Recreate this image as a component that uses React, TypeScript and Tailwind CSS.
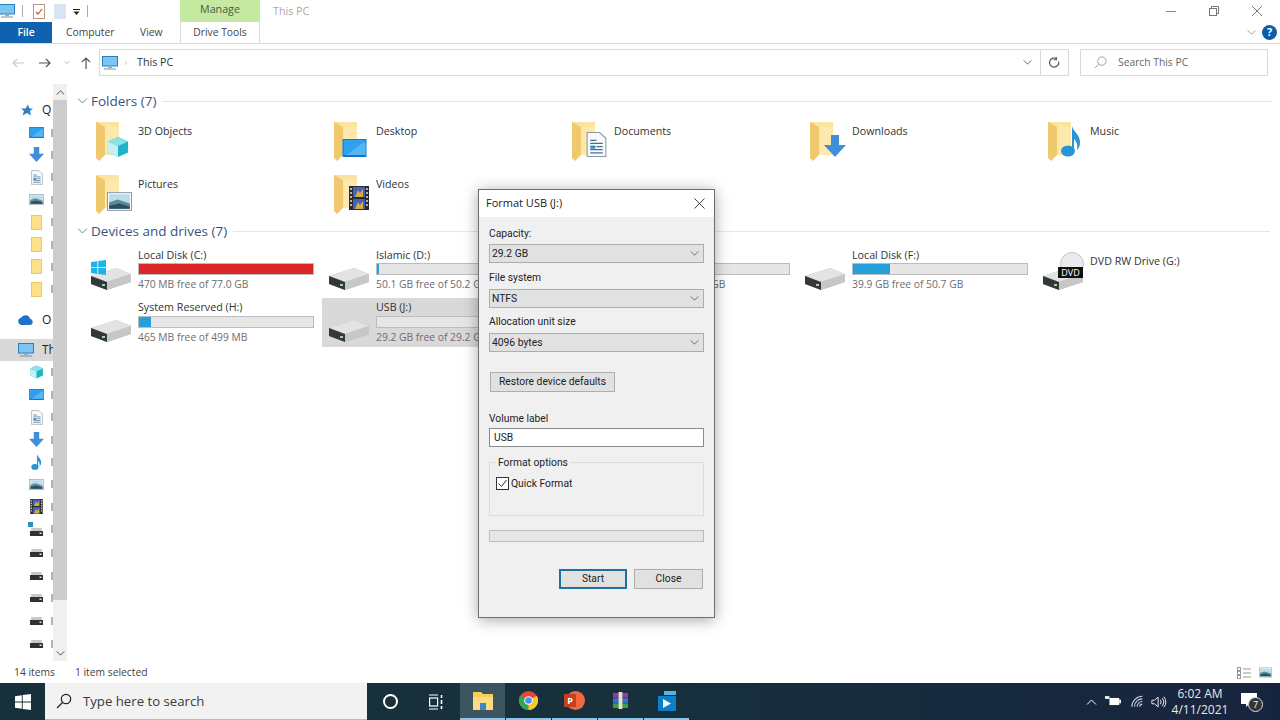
import type { ReactNode } from "react";

const folders = [
  { name: "3D Objects", kind: "cube" },
  { name: "Desktop", kind: "desktop" },
  { name: "Documents", kind: "doc" },
  { name: "Downloads", kind: "down" },
  { name: "Music", kind: "music" },
  { name: "Pictures", kind: "pics" },
  { name: "Videos", kind: "video" },
];

const drives = [
  { name: "Local Disk (C:)", free: "470 MB free of 77.0 GB", used: 100, color: "bg-[#da2626]", win: true },
  { name: "Islamic (D:)", free: "50.1 GB free of 50.2 GB", used: 1, color: "bg-[#26a0da]" },
  { name: "New Volume (E:)", free: "50.1 GB free of 50.2 GB", used: 1, color: "bg-[#26a0da]" },
  { name: "Local Disk (F:)", free: "39.9 GB free of 50.7 GB", used: 21, color: "bg-[#26a0da]" },
  { name: "DVD RW Drive (G:)", dvd: true },
  { name: "System Reserved (H:)", free: "465 MB free of 499 MB", used: 7, color: "bg-[#26a0da]", low: true },
  { name: "USB (J:)", free: "29.2 GB free of 29.2 GB", used: 0, color: "bg-[#26a0da]", selected: true, low: true },
];

function Glyph({ kind }: { kind: string }) {
  if (kind === "cube")
    return (
      <svg viewBox="0 0 24 24" className="h-full w-full">
        <polygon points="12,1 23,6 23,18 12,23 1,18 1,6" fill="#1fb3c9" />
        <polygon points="12,1 23,6 12,11 1,6" fill="#8be3ea" />
        <polygon points="1,6 12,11 12,23 1,18" fill="#c4f1f3" />
      </svg>
    );
  if (kind === "desktop")
    return (
      <svg viewBox="0 0 24 18" className="h-full w-full">
        <rect x="0" y="0" width="24" height="18" fill="#0f78c8" />
        <rect x="1" y="1" width="22" height="15" fill="#2f9ff0" />
        <polygon points="4,16 20,4 23,4 23,16" fill="#55b6f5" />
      </svg>
    );
  if (kind === "doc")
    return (
      <svg viewBox="0 0 20 24" className="h-full w-full">
        <polygon points="1,0.5 13,0.5 19,6 19,23.5 1,23.5" fill="#f8fbfd" stroke="#8a97a3" />
        <path d="M4 8h6M4 11h12M10 14h6M4 17h12M4 20h12" stroke="#4a6d8c" strokeWidth="1.2" />
        <rect x="4" y="13" width="5" height="3" fill="#2e8fd0" />
      </svg>
    );
  if (kind === "down")
    return (
      <svg viewBox="0 0 22 22" className="h-full w-full">
        <polygon points="7,0 15,0 15,10 22,10 11,22 0,10 7,10" fill="#3d8fdc" />
      </svg>
    );
  if (kind === "music")
    return (
      <svg viewBox="0 0 20 31" className="h-full w-full">
        <ellipse cx="7" cy="25" rx="7" ry="5.5" fill="#2a94d8" />
        <path d="M11 25V0c1 6 8 8 8 16 0 4-1 6-3 8 1-6-1-9-3-11v12z" fill="#2a94d8" />
      </svg>
    );
  if (kind === "pics")
    return (
      <svg viewBox="0 0 24 18" className="h-full w-full">
        <rect x="0.5" y="0.5" width="23" height="17" fill="#fff" stroke="#8a97a3" />
        <rect x="2" y="2" width="20" height="14" fill="#bcdcea" />
        <polygon points="2,10 10,7 22,11 22,16 2,16" fill="#5d8a94" />
        <polygon points="2,13 12,11 22,14 22,16 2,16" fill="#27505c" />
      </svg>
    );
  return (
    <svg viewBox="0 0 20 24" className="h-full w-full">
      <rect width="20" height="24" fill="#2a2a2a" />
      <rect x="4" y="1" width="12" height="10" fill="#3f62c4" />
      <rect x="4" y="13" width="12" height="10" fill="#3f62c4" />
      <path d="M6 11l3-7 2 3 3-4v8z" fill="#d9a93a" />
      <path d="M6 23l3-7 2 3 3-4v8z" fill="#d9a93a" />
      <path d="M2 2v20M18 2v20" stroke="#d8d8d8" strokeWidth="1.6" strokeDasharray="2 2" />
    </svg>
  );
}

function FolderIcon({ kind }: { kind: string }) {
  const overlay: Record<string, string> = {
    cube: "right-[-1px] bottom-[2px] w-[22px] h-[24px]",
    desktop: "right-[-2px] bottom-[4px] w-[27px] h-[18px]",
    doc: "right-[-3px] bottom-[4px] w-[21px] h-[25px]",
    down: "right-[-4px] bottom-[3px] w-[22px] h-[24px]",
    music: "right-[-1px] bottom-[4px] w-[20px] h-[31px]",
    pics: "right-[-4px] bottom-[3px] w-[25px] h-[19px]",
    video: "right-[-3px] bottom-[3px] w-[20px] h-[26px]",
  };
  return (
    <div className="relative h-[39px] w-[32px]">
      <svg viewBox="0 0 32 39" className="h-full w-full">
        <rect x="0" y="0" width="23" height="33" fill="#fbe3a0" />
        <polygon points="0,0 9,5 9,33 3,39 0,36" fill="#f0c96f" />
        <rect x="9" y="5" width="14" height="28" fill="#fde9ae" />
      </svg>
      <div className={`absolute ${overlay[kind]}`}>
        <Glyph kind={kind} />
      </div>
    </div>
  );
}

function DriveIcon() {
  return (
    <svg viewBox="0 0 40 22" className="h-[22px] w-[40px]">
      <polygon points="0,8 25,0 40,6 40,14 16,22 0,16" fill="#b9b9b9" />
      <polygon points="0,8 25,0 40,6 16,14" fill="#e3e3e3" />
      <polygon points="0,8 16,14 16,22 0,16" fill="#33383a" />
      <polygon points="16,14 40,6 40,14 16,22" fill="#c7c7c7" />
      <rect x="11" y="16" width="3" height="2" fill="#a8d0a0" />
    </svg>
  );
}

function SmallDrive() {
  return (
    <svg viewBox="0 0 13 8" className="h-[8px] w-[13px]">
      <rect x="1" y="0" width="11" height="3" rx="1" fill="#c9c9c9" />
      <rect x="0" y="3" width="13" height="5" fill="#2f3234" />
      <rect x="9.500" y="4.500" width="2" height="1.500" fill="#e4e4e4" />
    </svg>
  );
}

function WinLogo({ className, color }: { className: string; color: string }) {
  return (
    <svg viewBox="0 0 16 16" className={className}>
      <path d="M0 2.2l6.8-1v6.4H0zM7.7 1.1L16 0v7.6H7.7zM0 8.4h6.8v6.4L0 13.8zM7.7 8.4H16V16l-8.3-1.1z" fill={color} />
    </svg>
  );
}

function Chevron({ className, color = "#6a6a6a" }: { className: string; color?: string }) {
  return (
    <svg viewBox="0 0 10 6" className={className}>
      <path d="M0.5 0.5L5 5l4.5-4.5" fill="none" stroke={color} strokeWidth="1" />
    </svg>
  );
}

function Monitor({ className }: { className: string }) {
  return (
    <svg viewBox="0 0 16 14" className={className}>
      <rect x="0" y="0" width="16" height="10.5" fill="#2a7fc0" />
      <rect x="1" y="1" width="14" height="8.5" fill="#7cc6f2" />
      <rect x="6" y="10.5" width="4" height="1.5" fill="#9aa7b2" />
      <rect x="2" y="12.5" width="12" height="1" fill="#7d8a96" />
    </svg>
  );
}

function GroupHeader({ title, line }: { title: string; line: string }) {
  return (
    <div className="flex h-4 items-center">
      <Chevron className="ml-[-7px] h-[6px] w-[11px]" color="#7a8594" />
      <span className="ml-[3px] text-[13.5px] text-[#1f3f73] opacity-90">{title}</span>
      <div className={`ml-[6px] h-px ${line} bg-[#e6e6e6]`} />
    </div>
  );
}

function SideRow({ children, label, mt, selected }: { children: ReactNode; label?: string; mt?: string; selected?: boolean }) {
  return (
    <div className={`flex h-[22.4px] w-[53px] shrink-0 items-center justify-end ${mt ?? ""} ${selected ? "bg-[#d9d9d9]" : ""}`}>
      <div className="flex w-[17px] justify-center">{children}</div>
      {label ? (
        <span className="ml-[3px] w-[11px] overflow-hidden text-[12px] leading-none text-[#222]">{label}</span>
      ) : (
        <span className="ml-[6px] mr-0 h-[8px] w-[2px] bg-[#a08f8f] opacity-70" />
      )}
    </div>
  );
}

function SmallFolder() {
  return <div className="h-[15px] w-[11px] border border-[#ecc766] bg-[#fde08a]" />;
}

function Sidebar() {
  return (
    <div className="flex w-[67px] shrink-0">
      <div className="flex w-[53px] flex-col pt-[15px]">
        <SideRow label="Q">
          <svg viewBox="0 0 24 24" className="ml-[-8px] h-[12px] w-[12px]">
            <polygon points="14,1 17,9 24,9 18,14 20,23 12,18 3,23 6,14 0,9 9,9" fill="#2f7fc4" />
          </svg>
        </SideRow>
        <SideRow><div className="h-[11px] w-[15px]"><Glyph kind="desktop" /></div></SideRow>
        <SideRow><div className="h-[15px] w-[15px]"><Glyph kind="down" /></div></SideRow>
        <SideRow><div className="h-[15px] w-[12px]"><Glyph kind="doc" /></div></SideRow>
        <SideRow><div className="h-[11px] w-[15px]"><Glyph kind="pics" /></div></SideRow>
        <SideRow><SmallFolder /></SideRow>
        <SideRow><SmallFolder /></SideRow>
        <SideRow><SmallFolder /></SideRow>
        <SideRow><SmallFolder /></SideRow>
        <SideRow label="O" mt="mt-[8px]">
          <svg viewBox="0 0 18 11" className="ml-[-9px] h-[10px] w-[16px]">
            <path d="M4 11a4 4 0 0 1-.6-7.9A5.5 5.5 0 0 1 13.6 4 3.6 3.6 0 0 1 14 11z" fill="#1b74c5" />
          </svg>
        </SideRow>
        <SideRow label="Th" mt="mt-[8px]" selected><Monitor className="ml-[-10px] h-[14px] w-[16px]" /></SideRow>
        <SideRow><div className="h-[14px] w-[15px]"><Glyph kind="cube" /></div></SideRow>
        <SideRow><div className="h-[11px] w-[15px]"><Glyph kind="desktop" /></div></SideRow>
        <SideRow><div className="h-[15px] w-[12px]"><Glyph kind="doc" /></div></SideRow>
        <SideRow><div className="h-[15px] w-[15px]"><Glyph kind="down" /></div></SideRow>
        <SideRow><div className="h-[16px] w-[11px]"><Glyph kind="music" /></div></SideRow>
        <SideRow><div className="h-[11px] w-[15px]"><Glyph kind="pics" /></div></SideRow>
        <SideRow><div className="h-[15px] w-[13px]"><Glyph kind="video" /></div></SideRow>
        <SideRow>
          <div className="relative mt-[5px]">
            <SmallDrive />
            <div className="absolute left-[-2px] top-[-6px] h-[5px] w-[5px] bg-[#2f8fc4]" />
          </div>
        </SideRow>
        <SideRow mt="mt-[1px]"><SmallDrive /></SideRow>
        <SideRow mt="mt-[1px]"><SmallDrive /></SideRow>
        <SideRow><SmallDrive /></SideRow>
        <SideRow><SmallDrive /></SideRow>
        <SideRow mt="mt-[1px]"><SmallDrive /></SideRow>
      </div>
      <div className="flex w-[14px] flex-col items-center bg-[#f0f0f0]">
        <div className="flex h-[16px] items-center"><Chevron className="h-[5px] w-[9px] rotate-180" color="#333" /></div>
        <div className="h-[500px] w-full bg-[#cdcdcd]" />
        <div className="flex-1" />
        <div className="flex h-[16px] items-center"><Chevron className="h-[5px] w-[9px]" color="#333" /></div>
      </div>
    </div>
  );
}

function DriveCell({ d }: { d: (typeof drives)[number] }) {
  return (
    <div className={`flex w-[238px] pl-[7px] ${d.low ? "h-[49px]" : "h-[52px]"} ${d.selected ? "bg-[#d9d9d9]" : ""}`}>
      <div className={`relative flex h-full w-[47px] shrink-0 items-end ${d.low ? "pb-[5px]" : "pb-[8px]"}`}>
        <DriveIcon />
        {d.win && <WinLogo className="absolute left-0 top-[14px] h-[15px] w-[15px]" color="#1db4e8" />}
        {d.dvd && (
          <>
            <div className="absolute left-[17px] top-[6px] h-[24px] w-[24px] rounded-full border border-[#c4c4c4] bg-[#e8eaeb]" />
            <div className="absolute left-[15px] top-[21px] h-[11px] w-[25px] bg-[#111] text-center text-[9px] leading-[11px] text-white">DVD</div>
          </>
        )}
      </div>
      {d.dvd ? (
        <div className="pt-[7px] text-[#333]">{d.name}</div>
      ) : (
        <div className={`w-[176px] ${d.low ? "pt-[1px]" : "pt-[1px]"}`}>
          <div className="h-[16px] leading-[16px] text-[#333]">{d.name}</div>
          <div className={`h-[12px] w-full border border-[#bcbcbc] bg-[#e6e6e6] ${d.low ? "mt-[1px]" : ""}`}>
            <div className={`h-full ${d.color}`} style={{ width: `${d.used}%` }} />
          </div>
          <div className="mt-[1px] h-[16px] whitespace-nowrap text-[10.3px] leading-[16px] text-[#6d6d6d]">{d.free}</div>
        </div>
      )}
    </div>
  );
}

function Select({ value }: { value: string }) {
  return (
    <div className="flex h-[19px] w-[215px] items-center justify-between border border-[#adadad] bg-[#e1e1e1] pl-[2px] pr-[4px]">
      <span className="text-[#222]">{value}</span>
      <Chevron className="h-[5px] w-[9px]" color="#555" />
    </div>
  );
}

function FormatDialog() {
  return (
    <div className="absolute left-[478px] top-[189px] h-[429px] w-[237px] border border-[#6e6e6e] bg-[#f0f0f0] shadow-[0_2px_14px_rgba(0,0,0,0.35)]">
      <div className="flex h-[27px] items-center justify-between bg-white pl-[7px] pr-[9px] text-[#222]">
        <span className="text-[11px]">Format USB (J:)</span>
        <svg viewBox="0 0 12 12" className="h-[11px] w-[11px]"><path d="M0.5 0.5l11 11M11.5 0.5l-11 11" stroke="#333" strokeWidth="1" /></svg>
      </div>
      <div className="px-[10px] font-['Roboto',sans-serif] text-[10.3px] text-[#222]">
        <div className="mt-[8px] h-[19px] leading-[17px]">Capacity:</div>
        <Select value="29.2 GB" />
        <div className="mt-[5px] h-[21px] leading-[20px]">File system</div>
        <Select value="NTFS" />
        <div className="mt-[4px] h-[21px] leading-[20px]">Allocation unit size</div>
        <Select value="4096 bytes" />
        <div className="ml-[1px] mt-[20px] flex h-[20px] w-[125px] items-center justify-center border border-[#adadad] bg-[#e1e1e1]">Restore device defaults</div>
        <div className="mt-[18px] h-[18px] leading-[17px]">Volume label</div>
        <div className="flex h-[19px] w-[215px] items-center border border-[#8a8a8a] bg-white pl-[4px]">USB</div>
        <div className="relative mt-[15px] h-[54px] w-[215px] border border-[#dcdcdc]">
          <span className="absolute left-[6px] top-[-7px] bg-[#f0f0f0] px-[2px] leading-[14px]">Format options</span>
          <div className="absolute left-[6px] top-[13px] flex items-center">
            <svg viewBox="0 0 13 13" className="h-[13px] w-[13px]">
              <rect x="0.5" y="0.5" width="12" height="12" fill="#fff" stroke="#333" />
              <path d="M2.5 6.5l3 3 5-6.5" fill="none" stroke="#333" strokeWidth="1" />
            </svg>
            <span className="ml-[2px]">Quick Format</span>
          </div>
        </div>
        <div className="mt-[14px] h-[12px] w-[215px] border border-[#bcbcbc] bg-[#e6e6e6]" />
        <div className="mt-[27px] flex gap-[7px] pl-[70px]">
          <div className="flex h-[20px] w-[68px] items-center justify-center border-2 border-[#1f6f9f] bg-[#e1e1e1]">Start</div>
          <div className="flex h-[20px] w-[69px] items-center justify-center border border-[#adadad] bg-[#e1e1e1]">Close</div>
        </div>
      </div>
    </div>
  );
}

function Taskbar() {
  return (
    <div className="flex h-[37px] items-center bg-gradient-to-r from-[#17303c] via-[#17303c] to-[#17243f] text-white">
      <div className="flex h-full w-[45px] items-center justify-center">
        <WinLogo className="h-[16px] w-[16px]" color="#ffffff" />
      </div>
      <div className="flex h-full w-[322px] items-center border-b border-[#bbb] bg-[#f2f2f2] pl-[11px]">
        <svg viewBox="0 0 16 16" className="h-[16px] w-[16px]"><circle cx="10" cy="6" r="4.7" fill="none" stroke="#222" strokeWidth="1.2" /><path d="M6.5 9.5L1 15" stroke="#222" strokeWidth="1.3" /></svg>
        <span className="ml-[11px] pt-[2px] text-[13.2px] text-[#3a3a3a]">Type here to search</span>
      </div>
      <div className="flex h-full w-[46px] items-center justify-center">
        <div className="h-[15px] w-[15px] rounded-full border-2 border-white" />
      </div>
      <div className="flex h-full w-[45px] items-center justify-center">
        <svg viewBox="0 0 16 16" className="h-[16px] w-[16px]" fill="none" stroke="#fff" strokeWidth="1.2">
          <path d="M1 1h9M1 15h9" /><rect x="1.6" y="4" width="8" height="8" /><path d="M13.5 1v3M13.5 6v4M13.5 12v3" strokeWidth="1.6" />
        </svg>
      </div>
      <div className="ml-[2px] flex h-full w-[45px] items-center justify-center border-b-2 border-[#8cc6ee] bg-[#3c5560]">
        <svg viewBox="0 0 20 18" className="h-[18px] w-[20px]">
          <path d="M0 0h8l2 2h10v16H0z" fill="#f7cf58" />
          <rect x="0" y="5" width="20" height="13" fill="#fbdc82" />
          <rect x="7" y="11" width="6" height="7" fill="#3b86c4" />
        </svg>
      </div>
      <div className="ml-[1px] flex h-full w-[45px] items-center justify-center border-b-2 border-[#8cc6ee]">
        <svg viewBox="0 0 20 20" className="h-[19px] w-[19px]">
          <circle cx="10" cy="10" r="10" fill="#e2483b" />
          <path d="M10 10L1.3 5A10 10 0 0 0 10 20z" fill="#2fa84f" />
          <path d="M10 10l8.7-5A10 10 0 0 1 10 20z" fill="#f8c82d" />
          <circle cx="10" cy="10" r="4.6" fill="#fff" />
          <circle cx="10" cy="10" r="3.5" fill="#4a8ef0" />
        </svg>
      </div>
      <div className="ml-[1px] flex h-full w-[45px] items-center justify-center border-b-2 border-[#8cc6ee]">
        <div className="relative h-[19px] w-[21px]">
          <div className="absolute right-0 top-0 h-[19px] w-[19px] rounded-full bg-[#f0693f]" />
          <div className="absolute left-0 top-[3px] flex h-[13px] w-[12px] items-center justify-center rounded-[1px] bg-[#c4401f] text-[9px] font-bold text-white">P</div>
        </div>
      </div>
      <div className="ml-[1px] flex h-full w-[45px] items-center justify-center border-b-2 border-[#8cc6ee]">
        <svg viewBox="0 0 18 18" className="h-[17px] w-[17px]">
          <rect x="1" y="1" width="16" height="5" fill="#8a3fa8" />
          <rect x="1" y="6.5" width="16" height="5" fill="#3d6fc0" />
          <rect x="1" y="12" width="16" height="5" fill="#3f9a4a" />
          <rect x="7" y="0" width="4" height="18" fill="#e8e0c8" />
        </svg>
      </div>
      <div className="ml-[1px] flex h-full w-[45px] items-center justify-center border-b-2 border-[#8cc6ee]">
        <svg viewBox="0 0 18 20" className="h-[20px] w-[18px]">
          <rect x="0" y="5" width="18" height="15" fill="#0d7fc7" />
          <rect x="6" y="0" width="12" height="4" fill="#55b4e6" />
          <polygon points="5,8 13,12.5 5,17" fill="#fff" />
        </svg>
      </div>
      <div className="ml-auto flex h-full items-center">
        <Chevron className="mr-[8px] h-[6px] w-[11px] rotate-180" color="#fff" />
        <svg viewBox="0 0 18 12" className="mr-[10px] h-[11px] w-[16px]">
          <rect x="5" y="2" width="11" height="8" fill="#fff" /><rect x="16" y="4" width="2" height="4" fill="#fff" /><rect x="0" y="0" width="5" height="3" fill="#fff" />
        </svg>
        <svg viewBox="0 0 16 14" className="mr-[6px] h-[13px] w-[14px]" fill="none" stroke="#c8d0d8" strokeWidth="1.2">
          <path d="M1 13a12 12 0 0 1 12-12M4 13a9 9 0 0 1 9-9M7 13a6 6 0 0 1 6-6M10 13a3 3 0 0 1 3-3" />
        </svg>
        <svg viewBox="0 0 18 14" className="mr-[3px] h-[14px] w-[16px]" fill="none" stroke="#fff" strokeWidth="1">
          <path d="M1 5v4h3l4 3.5V1.500L4 5zM10.500 4.500a4 4 0 0 1 0 5M12.500 2.500a7 7 0 0 1 0 9M14.500 1a10 10 0 0 1 0 12" />
        </svg>
        <div className="w-[60px] text-center text-[12px] leading-[16px] text-[#e8e8e8]">
          <div>6:02 AM</div>
          <div>4/11/2021</div>
        </div>
        <div className="relative ml-[11px] mr-[21px] h-[17px] w-[18px]">
          <svg viewBox="0 0 16 15" className="h-[15px] w-[16px]"><path d="M0 0h16v11H8l-3 3v-3H0z" fill="#fff" /></svg>
          <div className="absolute left-[7px] top-[4px] flex h-[15px] w-[15px] items-center justify-center rounded-full border border-[#ddd] bg-[#333] text-[9px] text-white">7</div>
        </div>
      </div>
    </div>
  );
}

export default function App() {
  return (
    <div className="relative h-[720px] w-[1280px] overflow-hidden bg-white font-['Open_Sans',sans-serif] text-[10.7px] text-[#333]">
      {/* title strip */}
      <div className="flex h-[22px] items-center">
        <Monitor className="ml-[-1px] h-[14px] w-[16px]" />
        <div className="ml-[7px] h-[12px] w-px bg-[#aaa]" />
        <svg viewBox="0 0 12 15" className="ml-[10px] h-[15px] w-[12px]">
          <rect x="0.5" y="0.5" width="11" height="14" fill="#fff" stroke="#b89880" />
          <path d="M3 8l2 2 4-5" fill="none" stroke="#c9503a" strokeWidth="1.2" />
        </svg>
        <div className="ml-[9px] h-[15px] w-[12px] bg-[#d9e5f5]" />
        <svg viewBox="0 0 7 6" className="ml-[7px] mt-[2px] h-[6px] w-[7px]"><path d="M0 0.500h7" stroke="#222" /><path d="M0.500 2.500h6L3.500 6z" fill="#222" /></svg>
        <div className="ml-[7px] h-[12px] w-px bg-[#aaa]" />
        <div className="ml-[92px] flex h-full w-[80px] items-center justify-center bg-[#c6e9a2] pb-[3px] text-[#3f5f45]">Manage</div>
        <span className="ml-[13px] text-[#aaa]">This PC</span>
        <div className="ml-auto mr-[18px] flex items-center gap-[33px]">
          <div className="h-px w-[10px] bg-[#888]" />
          <svg viewBox="0 0 10 10" className="h-[10px] w-[10px]" fill="none" stroke="#777"><rect x="0.5" y="2.500" width="7" height="7" /><path d="M2.500 2.500v-2h7v7h-2" /></svg>
          <svg viewBox="0 0 10 10" className="h-[10px] w-[10px]"><path d="M0 0l10 10M10 0L0 10" stroke="#777" /></svg>
        </div>
      </div>
      {/* ribbon tabs */}
      <div className="flex h-[22px] items-stretch border-b border-[#dadada] text-[10.3px] text-[#444]">
        <div className="flex w-[52px] items-center justify-center bg-[#0f62ad] font-semibold text-white">File</div>
        <div className="flex w-[74px] items-center pl-[14px]">Computer</div>
        <div className="flex w-[54px] items-center pl-[14px]">View</div>
        <div className="flex w-[80px] items-center justify-center border-x border-[#dadada]">Drive Tools</div>
        <div className="ml-auto mr-[3px] flex items-center gap-[6px]">
          <Chevron className="h-[5px] w-[9px]" color="#888" />
          <div className="flex h-[15px] w-[15px] items-center justify-center rounded-full bg-[#0b5cab] text-[11px] font-bold text-white">?</div>
        </div>
      </div>
      {/* address row */}
      <div className="flex h-[40px] items-start pt-[5px]">
        <div className="flex h-[27px] w-[99px] items-center">
          <svg viewBox="0 0 12 10" className="ml-[12px] h-[10px] w-[12px]" fill="none" stroke="#c8c8c8" strokeWidth="1.2"><path d="M12 5H1M5 1L1 5l4 4" /></svg>
          <svg viewBox="0 0 12 10" className="ml-[15px] h-[10px] w-[12px]" fill="none" stroke="#555" strokeWidth="1.2"><path d="M0 5h11M7 1l4 4-4 4" /></svg>
          <Chevron className="ml-[13px] h-[3px] w-[6px]" color="#777" />
          <svg viewBox="0 0 10 12" className="ml-[11px] h-[12px] w-[10px]" fill="none" stroke="#555" strokeWidth="1.2"><path d="M5 12V1M1 5l4-4 4 4" /></svg>
        </div>
        <div className="flex h-[27px] w-[970px] items-center border border-[#d9d9d9]">
          <Monitor className="ml-[2px] h-[14px] w-[16px]" />
          <Chevron className="ml-[6px] h-[6px] w-[4px] -rotate-90" color="#777" />
          <span className="ml-[9px] text-[#333]">This PC</span>
          <div className="ml-auto flex h-full items-center">
            <Chevron className="mr-[8px] h-[5px] w-[9px]" color="#444" />
            <div className="flex h-full w-[28px] items-center justify-center border-l border-[#d9d9d9]">
              <svg viewBox="0 0 12 12" className="h-[11px] w-[11px]" fill="none" stroke="#555" strokeWidth="1.3"><path d="M10.500 5a5 5 0 1 1-2.500-3.300M8 0v3H5" /></svg>
            </div>
          </div>
        </div>
        <div className="ml-[11px] flex h-[27px] w-[188px] items-center border border-[#d9d9d9] text-[10.3px] text-[#666]">
          <svg viewBox="0 0 14 14" className="ml-[13px] h-[13px] w-[13px]" fill="none" stroke="#999"><circle cx="8.500" cy="5.500" r="4.500" /><path d="M5 9l-4 4" /></svg>
          <span className="ml-[11px]">Search This PC</span>
        </div>
      </div>
      {/* main area */}
      <div className="flex h-[577px]">
        <Sidebar />
        <div className="pl-[17px] pt-[9px]">
          <GroupHeader title="Folders (7)" line="w-[1110px]" />
          <div className="mt-[9px] grid w-[1190px] grid-cols-5">
            {folders.map((f) => (
              <div key={f.name} className="flex h-[53px] w-[238px] pl-[12px] pt-[4px]">
                <FolderIcon kind={f.kind} />
                <span className="ml-[10px] leading-[18px] text-[#333]">{f.name}</span>
              </div>
            ))}
          </div>
          <div className="mt-[-1px]">
            <GroupHeader title="Devices and drives (7)" line="w-[1037px]" />
          </div>
          <div className="mt-[7px] grid w-[1190px] grid-cols-5">
            {drives.map((d) => (
              <DriveCell key={d.name} d={d} />
            ))}
          </div>
        </div>
      </div>
      {/* status bar */}
      <div className="flex h-[22px] items-center pt-[1px] text-[10.3px] text-[#444]">
        <span className="ml-[14px]">14 items</span>
        <span className="ml-[20px]">1 item selected</span>
        <div className="ml-auto mr-[8px] flex items-center gap-[8px]">
          <svg viewBox="0 0 14 12" className="h-[12px] w-[14px]" fill="none" stroke="#999"><rect x="0.500" y="0.500" width="3" height="3" /><rect x="0.500" y="4.500" width="3" height="3" /><rect x="0.500" y="8.500" width="3" height="3" /><path d="M6 2h8M6 6h8M6 10h8" /></svg>
          <div className="h-[11px] w-[13px]"><Glyph kind="pics" /></div>
        </div>
      </div>
      <Taskbar />
      <FormatDialog />
    </div>
  );
}
